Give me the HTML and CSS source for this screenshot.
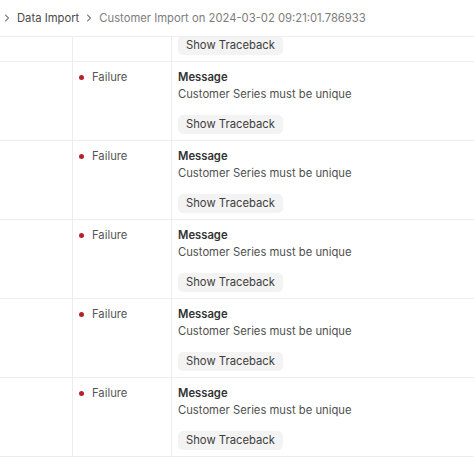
FILE: index.html
```html
<!DOCTYPE html>
<html>
<head>
<meta charset="utf-8">
<link rel="stylesheet" href="styles.css">
</head>
<body>
<header class="topbar">
  <nav class="crumbs">
    <svg class="chev" viewBox="0 0 16 16" width="12" height="12"><path d="M6 4l4 4-4 4" fill="none" stroke="currentColor" stroke-width="1.4" stroke-linecap="round" stroke-linejoin="round"/></svg>
    <span class="crumb">Data Import</span>
    <svg class="chev" viewBox="0 0 16 16" width="12" height="12"><path d="M6 4l4 4-4 4" fill="none" stroke="currentColor" stroke-width="1.4" stroke-linecap="round" stroke-linejoin="round"/></svg>
    <span class="crumb current">Customer Import on 2024-03-02 09:21:01.786933</span>
  </nav>
</header>
<main class="viewport">
  <div class="log">
    <div class="row">
      <div class="cell c-row"></div>
      <div class="cell c-status"><span class="dot"></span><span class="status">Failure</span></div>
      <div class="cell c-msg"><div class="title">Message</div><div class="text">Customer Series must be unique</div><button class="btn">Show Traceback</button></div>
    </div>
    <div class="row">
      <div class="cell c-row"></div>
      <div class="cell c-status"><span class="dot"></span><span class="status">Failure</span></div>
      <div class="cell c-msg"><div class="title">Message</div><div class="text">Customer Series must be unique</div><button class="btn">Show Traceback</button></div>
    </div>
    <div class="row">
      <div class="cell c-row"></div>
      <div class="cell c-status"><span class="dot"></span><span class="status">Failure</span></div>
      <div class="cell c-msg"><div class="title">Message</div><div class="text">Customer Series must be unique</div><button class="btn">Show Traceback</button></div>
    </div>
    <div class="row">
      <div class="cell c-row"></div>
      <div class="cell c-status"><span class="dot"></span><span class="status">Failure</span></div>
      <div class="cell c-msg"><div class="title">Message</div><div class="text">Customer Series must be unique</div><button class="btn">Show Traceback</button></div>
    </div>
    <div class="row">
      <div class="cell c-row"></div>
      <div class="cell c-status"><span class="dot"></span><span class="status">Failure</span></div>
      <div class="cell c-msg"><div class="title">Message</div><div class="text">Customer Series must be unique</div><button class="btn">Show Traceback</button></div>
    </div>
    <div class="row">
      <div class="cell c-row"></div>
      <div class="cell c-status"><span class="dot"></span><span class="status">Failure</span></div>
      <div class="cell c-msg"><div class="title">Message</div><div class="text">Customer Series must be unique</div><button class="btn">Show Traceback</button></div>
    </div>
  </div>
</main>
</body>
</html>
```
FILE: styles.css
```css
* { box-sizing: border-box; }
html, body { margin: 0; padding: 0; background: #fff; }
body {
  font-family: Inter, "Noto Sans", sans-serif;
  font-size: 11.25px;
  color: #383838;
  width: 474px;
  height: 472px;
  overflow: hidden;
}
.topbar {
  height: 37px;
  border-bottom: 1px solid #ededed;
  display: flex;
  align-items: center;
  padding-left: 1px;
  background: #fff;
}
.crumbs {
  display: flex;
  align-items: center;
  gap: 4px;
  white-space: nowrap;
}
.chev { color: #555555; flex: none; }
.crumb { color: #4a4a4a; }
.crumb.current { color: #7c7c7c; }
.viewport {
  height: 435px;
  overflow: hidden;
}
.log { margin-top: -54px; }
.row {
  display: grid;
  grid-template-columns: 73px 99px 1fr;
  border-bottom: 1px solid #ededed;
}
.cell {
  padding: 7px 6px 6px;
  line-height: 17px;
}
.c-row, .c-status { border-right: 1px solid #ededed; }
.c-status {
  display: flex;
  align-items: flex-start;
  gap: 8px;
  padding-left: 6px;
}
.dot {
  width: 5px;
  height: 5px;
  border-radius: 50%;
  background: #b5232a;
  margin-top: 6px;
  flex: none;
}
.status { color: #555555; }
.title { font-weight: 600; color: #333333; }
.text { color: #4f4f4f; }
.btn {
  display: inline-block;
  margin-top: 12px;
  height: 19px;
  padding: 0 8px;
  border: 0;
  border-radius: 5px;
  background: #f3f3f3;
  color: #3d3d3d;
  font-family: inherit;
  font-size: 11.25px;
  line-height: 19px;
}
```
